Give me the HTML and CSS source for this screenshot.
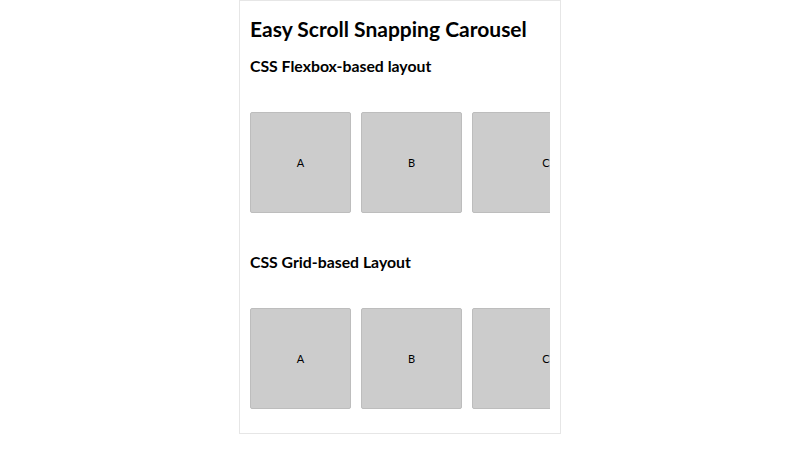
FILE: index.html
```html
<!DOCTYPE html>
<html lang="en">

<head>
    <meta charset="UTF-8">
    <meta name="viewport" content="width=device-width, initial-scale=1.0">
    <title>Easy Scroll Snapping Carousel</title>
    <link rel="stylesheet" href="styles.css">
</head>

<body>
    <div class="container">
        <h1>Easy Scroll Snapping Carousel</h1>

        <h2>CSS Flexbox-based layout</h2>
        <div class="carousel flex-carousel">
            <div class="slide">A</div>
            <div class="slide">B</div>
            <div class="slide slide-wide">C</div>
        </div>

        <h2>CSS Grid-based Layout</h2>
        <div class="carousel grid-carousel">
            <div class="slide">A</div>
            <div class="slide">B</div>
            <div class="slide slide-wide">C</div>
        </div>
    </div>
</body>

</html>
```

FILE: styles.css
```css
* {
    margin: 0;
    padding: 0;
    box-sizing: border-box;
}

body {
    font-family: "Lato", "Open Sans", sans-serif;
    color: #000;
    background: #fff;
}

.container {
    width: 322px;
    margin: 0 auto;
    padding: 0 10px 10px;
    border: 1px solid #e6e6e6;
}

h1 {
    font-size: 21px;
    line-height: 26px;
    font-weight: 700;
    white-space: nowrap;
    padding-top: 15px;
    margin-bottom: 14px;
}

h2 {
    font-size: 15.8px;
    line-height: 20px;
    font-weight: 700;
    white-space: nowrap;
}

.carousel + h2 {
    margin-top: 25px;
}

.carousel {
    padding: 36px 0 14px;
    overflow-x: auto;
    scroll-snap-type: x mandatory;
    scrollbar-width: none;
}

.flex-carousel {
    display: flex;
    gap: 10px;
}

.flex-carousel .slide {
    flex: 0 0 101px;
}

.flex-carousel .slide-wide {
    flex-basis: 148px;
}

.grid-carousel {
    display: grid;
    grid-template-columns: 101px 101px 148px;
    gap: 10px;
}

.slide {
    height: 101px;
    background: #cccccc;
    border: 1px solid #bdbdbd;
    border-radius: 2px;
    display: flex;
    align-items: center;
    justify-content: center;
    font-size: 11px;
    scroll-snap-align: start;
}
```
